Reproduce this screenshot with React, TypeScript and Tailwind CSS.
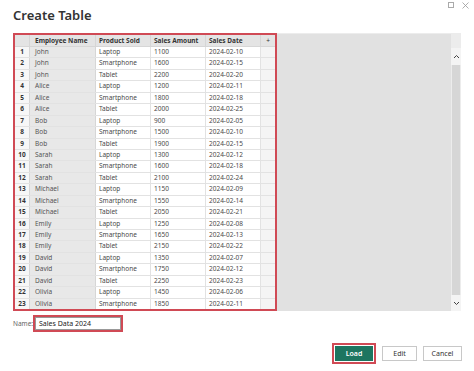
const rows = [
  ["John", "Laptop", "1100", "2024-02-10"],
  ["John", "Smartphone", "1600", "2024-02-15"],
  ["John", "Tablet", "2200", "2024-02-20"],
  ["Alice", "Laptop", "1200", "2024-02-11"],
  ["Alice", "Smartphone", "1800", "2024-02-18"],
  ["Alice", "Tablet", "2000", "2024-02-25"],
  ["Bob", "Laptop", "900", "2024-02-05"],
  ["Bob", "Smartphone", "1500", "2024-02-10"],
  ["Bob", "Tablet", "1900", "2024-02-15"],
  ["Sarah", "Laptop", "1300", "2024-02-12"],
  ["Sarah", "Smartphone", "1600", "2024-02-18"],
  ["Sarah", "Tablet", "2100", "2024-02-24"],
  ["Michael", "Laptop", "1150", "2024-02-09"],
  ["Michael", "Smartphone", "1550", "2024-02-14"],
  ["Michael", "Tablet", "2050", "2024-02-21"],
  ["Emily", "Laptop", "1250", "2024-02-08"],
  ["Emily", "Smartphone", "1650", "2024-02-13"],
  ["Emily", "Tablet", "2150", "2024-02-22"],
  ["David", "Laptop", "1350", "2024-02-07"],
  ["David", "Smartphone", "1750", "2024-02-12"],
  ["David", "Tablet", "2250", "2024-02-23"],
  ["Olivia", "Laptop", "1450", "2024-02-06"],
  ["Olivia", "Smartphone", "1850", "2024-02-11"],
];

export default function App() {
  return (
    <div
      className="w-[474px] h-[371px] bg-white overflow-hidden text-[#4a4a4a]"
      style={{ fontFamily: '"Noto Sans", "Open Sans", sans-serif' }}
    >
      {/* title bar */}
      <div className="flex justify-between h-[33px]">
        <h1 className="pl-[13px] pt-[6px] text-[13px] font-semibold text-[#333] leading-[18px]">
          Create Table
        </h1>
        <div className="flex items-start gap-[8px] pr-[5px] pt-[1px]">
          <div className="w-[6px] h-[6px] border border-[#aaa] mt-[1px]"></div>
          <svg width="7" height="7" viewBox="0 0 7 7" className="mt-[1px]">
            <path d="M0.5 0.5 L6.5 6.5 M6.5 0.5 L0.5 6.5" stroke="#999" strokeWidth="0.8" />
          </svg>
        </div>
      </div>

      {/* grid panel */}
      <div className="mx-[13px] flex h-[278px] bg-[#e1e1e1] border-t border-[#ececec]">
        <div className="w-[264px] border-2 border-[#d04a55] overflow-hidden bg-white -mt-px">
          <div className="flex h-[12px] bg-[#e4e4e4] text-[6.5px] font-bold text-[#333] leading-[12px] border-b border-[#d6d6d6]">
            <div className="w-[15px] border-r border-[#d6d6d6]"></div>
            <div className="w-[66px] pl-[5px] border-r border-[#d6d6d6]">Employee Name</div>
            <div className="w-[55px] pl-[3px] border-r border-[#d6d6d6]">Product Sold</div>
            <div className="w-[55px] pl-[3px] border-r border-[#d6d6d6]">Sales Amount</div>
            <div className="w-[55px] pl-[3px] border-r border-[#d6d6d6]">Sales Date</div>
            <div className="flex-1 text-center font-normal">+</div>
          </div>
          {rows.map((r, i) => (
            <div
              key={i}
              className="flex h-[11.45px] text-[6.5px] leading-[10.45px] border-b border-[#e2e2e2]"
            >
              <div className="w-[15px] text-center font-bold text-[#333] bg-[#f7f7f7] border-r border-[#d6d6d6]">
                {i + 1}
              </div>
              <div className="w-[66px] pl-[5px] bg-[#e8e8e8] border-r border-[#d6d6d6] text-[#555]">
                {r[0]}
              </div>
              <div className="w-[55px] pl-[3px] border-r border-[#e2e2e2]">{r[1]}</div>
              <div className="w-[55px] pl-[3px] border-r border-[#e2e2e2]">{r[2]}</div>
              <div className="w-[55px] pl-[3px] border-r border-[#e2e2e2]">{r[3]}</div>
              <div className="flex-1 bg-[#f4f4f4]"></div>
            </div>
          ))}
        </div>
        <div className="flex-1"></div>
        <div className="w-[10px] flex flex-col bg-[#ececec] pt-[14px]">
          <div className="h-[17px] flex items-center justify-center bg-[#f4f4f4]">
            <svg width="7" height="5" viewBox="0 0 7 5">
              <path d="M1 4 L3.5 1.5 L6 4" fill="none" stroke="#444" strokeWidth="1" />
            </svg>
          </div>
          <div className="flex-1 bg-[#d6d6d6] mx-[1px]"></div>
          <div className="h-[16px] flex items-center justify-center bg-[#f4f4f4]">
            <svg width="7" height="5" viewBox="0 0 7 5">
              <path d="M1 1 L3.5 3.5 L6 1" fill="none" stroke="#444" strokeWidth="1" />
            </svg>
          </div>
        </div>
      </div>

      {/* name */}
      <div className="flex items-center mt-[4px] pl-[13px]">
        <span className="text-[6.5px] text-[#666] w-[20px]">Name:</span>
        <div className="border-2 border-[#d04a55] w-[90px] h-[17px]">
          <div className="border border-[#999] h-full pl-[3px] text-[7px] leading-[11px] text-[#222]">
            Sales Data 2024
          </div>
        </div>
      </div>

      {/* buttons */}
      <div className="flex justify-end items-center gap-[6px] pr-[12px] mt-[11px]">
        <div className="flex border-2 border-[#d04a55] p-[1px]">
          <button className="block w-[38px] h-[15px] bg-[#1d7560] text-white text-[7px] font-semibold leading-[15px]">
            Load
          </button>
        </div>
        <button className="block w-[35px] h-[15px] border border-[#c8c8c8] bg-white text-[7px] text-[#333] leading-[13px]">
          Edit
        </button>
        <button className="block w-[39px] h-[15px] border border-[#c8c8c8] bg-white text-[7px] text-[#333] leading-[13px]">
          Cancel
        </button>
      </div>
    </div>
  );
}
